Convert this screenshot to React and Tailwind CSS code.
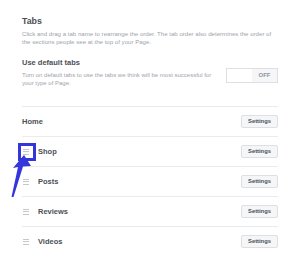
import React from 'react';

const tabs = [
  { name: 'Home', fixed: true },
  { name: 'Shop' },
  { name: 'Posts' },
  { name: 'Reviews' },
  { name: 'Videos' },
];

function DragHandle() {
  return (
    <div className="flex flex-col gap-[1.5px] w-[6px] mr-[9px] ml-[1px]">
      <span className="block h-px bg-[#c4c8ce]" />
      <span className="block h-px bg-[#c4c8ce]" />
      <span className="block h-px bg-[#c4c8ce]" />
    </div>
  );
}

function TabRow({ tab }) {
  return (
    <div className="flex items-center justify-between h-[30px] border-t border-[#e9ebee]">
      <div className="flex items-center">
        {!tab.fixed && <DragHandle />}
        <span className="text-[7.5px] font-bold text-[#4b4f56]">{tab.name}</span>
      </div>
      <button className="h-[13px] w-[37px] flex items-center justify-center rounded-[2px] border border-[#dddfe2] bg-[#f5f6f7] text-[5.8px] font-bold text-[#4b4f56]">
        Settings
      </button>
    </div>
  );
}

export default function App() {
  return (
    <div
      className="relative w-[300px] h-[257px] overflow-hidden bg-white"
      style={{ fontFamily: '"Liberation Sans", Arial, sans-serif' }}
    >
      <div className="px-[22px] pt-[16px]">
        <h2 className="text-[8.8px] leading-[10px] font-bold text-[#4b4f56]">Tabs</h2>
        <p className="mt-[4px] text-[6.1px] leading-[8px] text-[#a0a4ab]">
          Click and drag a tab name to rearrange the order. The tab order also determines the order of
          the sections people see at the top of your Page.
        </p>

        <div className="flex justify-between mt-[12px]">
          <div className="w-[200px]">
            <h3 className="text-[7.5px] leading-[9px] font-bold text-[#4b4f56]">Use default tabs</h3>
            <p className="mt-[4px] text-[6px] leading-[8px] text-[#a0a4ab]">
              Turn on default tabs to use the tabs we think will be most successful for your type of Page.
            </p>
          </div>
          <div className="mt-[10px] flex h-[15px] w-[52px] border border-[#dddfe2]">
            <div className="flex-1 bg-white" />
            <div className="w-[25px] flex items-center justify-center bg-[#f5f6f7] text-[6px] font-bold text-[#90949c]">
              OFF
            </div>
          </div>
        </div>

        <div className="mt-[19px]">
          {tabs.map((tab) => (
            <TabRow key={tab.name} tab={tab} />
          ))}
        </div>
      </div>

      {/* annotation: highlight box + arrow */}
      <div className="absolute left-[18px] top-[143px] w-[18px] h-[18px] border-[3px] border-[#3535dc]" />
      <svg className="absolute left-0 top-0" width="300" height="257" viewBox="0 0 300 257">
        <polygon
          points="24,155 31,166 23,166.5 13.5,197 11.5,197 18,167 13,168"
          fill="#3535dc"
        />
      </svg>
    </div>
  );
}
